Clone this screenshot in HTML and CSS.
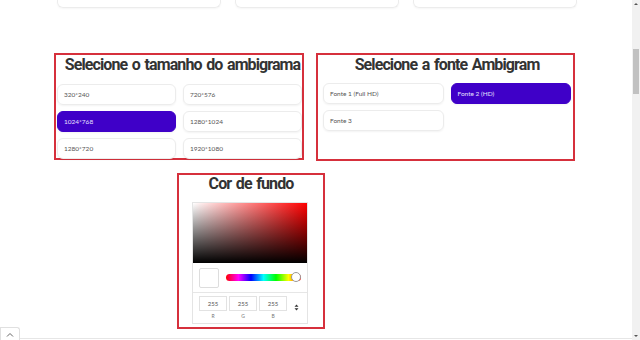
FILE: index.html
```html
<!DOCTYPE html>
<html lang="pt">
<head>
  <meta charset="UTF-8">
  <meta name="viewport" content="width=device-width, initial-scale=1.0">
  <title>Ambigrama</title>
  <link rel="stylesheet" href="styles.css">
</head>
<body>
  <div class="page">
    <div class="topCards">
      <div class="card"></div>
      <div class="card"></div>
      <div class="card"></div>
    </div>

    <div class="options">
      <div class="box sizeBox">
        <h3 class="boxTitle">Selecione o tamanho do ambigrama</h3>
        <div class="choices">
          <div class="choice">320*240</div>
          <div class="choice">720*576</div>
          <div class="choice active">1024*768</div>
          <div class="choice">1280*1024</div>
          <div class="choice">1280*720</div>
          <div class="choice">1920*1080</div>
        </div>
      </div>
      <div class="box fontBox">
        <h3 class="boxTitle">Selecione a fonte Ambigram</h3>
        <div class="choices">
          <div class="choice">Fonte 1 (Full HD)</div>
          <div class="choice active">Fonte 2 (HD)</div>
          <div class="choice">Fonte 3</div>
        </div>
      </div>
    </div>

    <div class="box colorBox">
      <h3 class="boxTitle">Cor de fundo</h3>
      <div class="picker">
        <div class="saturation"></div>
        <div class="controls">
          <div class="swatch"></div>
          <div class="hue"><span class="thumb"></span></div>
        </div>
        <div class="fields">
          <div class="field"><div class="input">255</div><div class="label">R</div></div>
          <div class="field"><div class="input">255</div><div class="label">G</div></div>
          <div class="field"><div class="input">255</div><div class="label">B</div></div>
          <svg class="toggle" width="5" height="7" viewBox="0 0 5 7">
            <path d="M2.5 0.5 L4.5 2.8 L0.5 2.8 Z M2.5 6.5 L4.5 4.2 L0.5 4.2 Z" fill="#333"/>
          </svg>
        </div>
      </div>
    </div>

    <div class="backTop">
      <svg width="8" height="5" viewBox="0 0 8 5"><path d="M1 4.5 L4 1.5 L7 4.5" fill="none" stroke="#666" stroke-width="1"/></svg>
    </div>
    <div class="bottomLine"></div>
  </div>

  <div class="scrollbar">
    <svg class="arrow" width="8" height="8" viewBox="0 0 8 8"><path d="M2 5 L4 3 L6 5 Z" fill="#555"/></svg>
    <div class="track"><div class="bar"></div></div>
    <svg class="arrow" width="8" height="8" viewBox="0 0 8 8"><path d="M2 3 L4 5 L6 3 Z" fill="#555"/></svg>
  </div>
</body>
</html>
```

FILE: styles.css
```css
html, body {
  margin: 0;
  height: 340px;
  overflow: hidden;
}
body {
  display: flex;
  font-family: Lato, "Noto Sans", sans-serif;
  background: #fff;
}
.page {
  flex: 1;
  display: flex;
  flex-direction: column;
}
.topCards {
  display: flex;
  gap: 14px;
  padding-left: 57px;
  height: 8px;
}
.topCards .card {
  width: 162px;
  height: 7px;
  border: 1px solid #ececec;
  border-top: none;
  border-radius: 0 0 6px 6px;
  box-shadow: 0 1px 2px rgba(0, 0, 0, 0.04);
}
.options {
  display: flex;
  gap: 12px;
  margin-top: 45px;
  padding-left: 54px;
}
.box {
  box-sizing: border-box;
  border: 2px solid #d6303c;
}
.boxTitle {
  margin: 0;
  text-align: center;
  white-space: nowrap;
  font-family: Roboto, "Liberation Sans", sans-serif;
  font-weight: 700;
  font-size: 16px;
  letter-spacing: -0.9px;
  word-spacing: 1.5px;
  line-height: 18px;
  color: #333;
}
.sizeBox {
  width: 250px;
  height: 107px;
  padding: 1px 0 0 1px;
}
.sizeBox .boxTitle {
  padding-left: 6px;
}
.fontBox {
  width: 259px;
  height: 108px;
  padding: 1px 2px 0 5px;
}
.choices {
  display: grid;
  grid-template-columns: 1fr 1fr;
  gap: 6px 7px;
  margin-top: 10px;
}
.fontBox .choices {
  margin-top: 9px;
}
.choice {
  height: 21px;
  box-sizing: border-box;
  border: 1px solid #ececec;
  border-radius: 6px;
  box-shadow: 0 1px 2px rgba(0, 0, 0, 0.05);
  padding-left: 6px;
  display: flex;
  align-items: center;
  font-size: 6.5px;
  color: #555;
}
.choice.active {
  background: #3f00c8;
  border-color: #3f00c8;
  color: #e6e0ff;
}
.colorBox {
  width: 148px;
  height: 156px;
  margin: 12px 0 0 177px;
}
.picker {
  width: 116px;
  margin: 9px 0 0 13px;
  box-sizing: border-box;
  border: 1px solid #e4e4e4;
}
.saturation {
  height: 60px;
  background:
    linear-gradient(to top, #000, rgba(0, 0, 0, 0)),
    linear-gradient(to right, #fff, #f00);
}
.controls {
  display: flex;
  align-items: center;
  gap: 7px;
  height: 29px;
  padding: 0 6px;
  border-bottom: 1px solid #e6e6e6;
}
.swatch {
  width: 18px;
  height: 18px;
  border: 1px solid #ddd;
  border-radius: 2px;
  background: #fff;
}
.hue {
  position: relative;
  flex: 1;
  height: 7px;
  border-radius: 4px;
  background: linear-gradient(to right, #f00, #f0f, #00f, #0ff, #0f0, #ff0, #f00);
}
.hue .thumb {
  position: absolute;
  right: 0;
  top: -2px;
  width: 10px;
  height: 10px;
  box-sizing: border-box;
  border-radius: 50%;
  background: #fff;
  border: 1px solid #999;
}
.fields {
  display: flex;
  gap: 2px;
  padding: 3px 6px 4px;
  align-items: flex-start;
}
.field {
  width: 28px;
  text-align: center;
}
.input {
  height: 15px;
  box-sizing: border-box;
  border: 1px solid #e2e2e2;
  font-size: 6px;
  line-height: 13px;
  color: #555;
}
.label {
  margin-top: 2px;
  font-size: 5px;
  line-height: 6px;
  color: #777;
}
.toggle {
  margin: 8px 0 0 5px;
}
.backTop {
  position: fixed;
  left: 0;
  bottom: 0;
  width: 20px;
  height: 13px;
  box-sizing: border-box;
  border: 1px solid #e0e0e0;
  border-bottom: none;
  border-radius: 0 3px 0 0;
  background: #fff;
  display: flex;
  align-items: center;
  justify-content: center;
}
.bottomLine {
  position: fixed;
  left: 20px;
  right: 8px;
  bottom: 1px;
  border-top: 1px solid #e6e6e6;
}
.scrollbar {
  width: 8px;
  background: #f1f1f1;
  display: flex;
  flex-direction: column;
}
.scrollbar .track {
  flex: 1;
}
.scrollbar .bar {
  margin: 41px 1px 0;
  height: 45px;
  background: #c1c1c1;
}
```
